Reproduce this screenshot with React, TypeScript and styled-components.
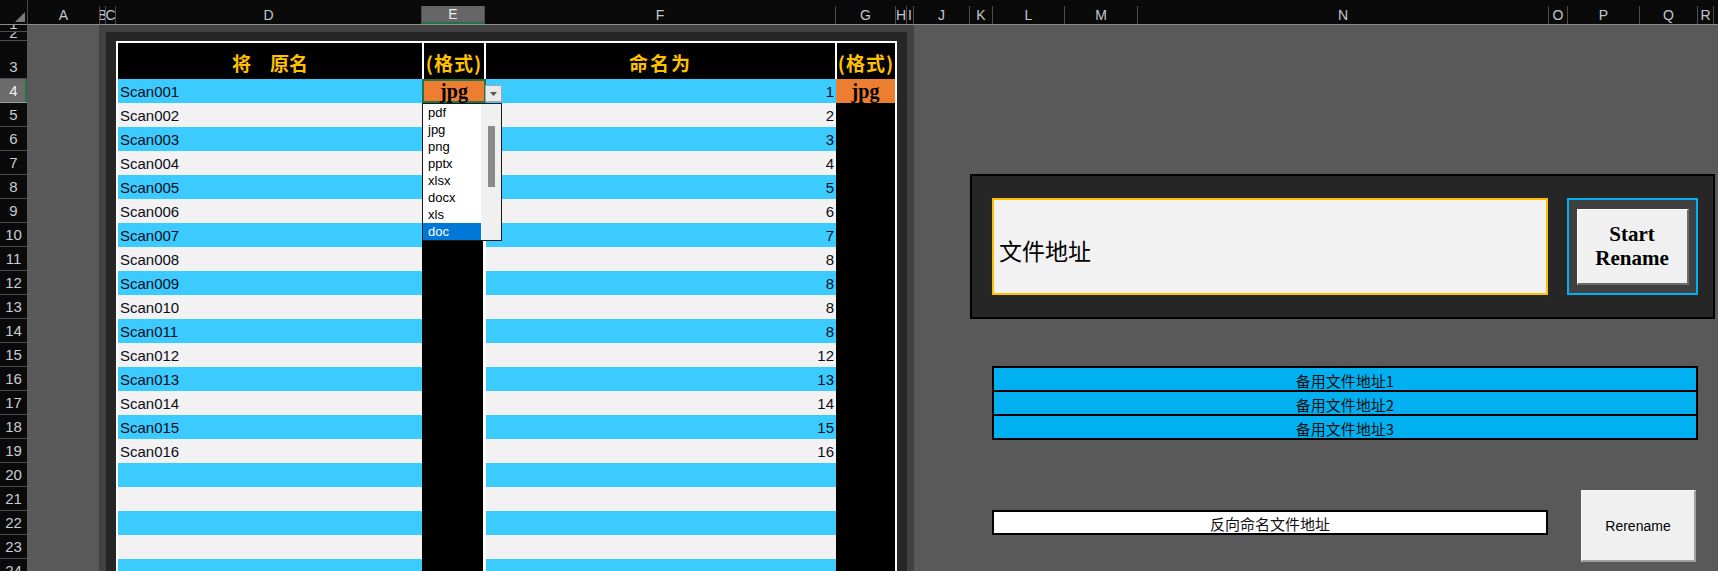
import React from 'react';
import styled, { createGlobalStyle } from 'styled-components';

const GlobalStyle = createGlobalStyle`
  html, body { margin: 0; padding: 0; background: #595959; overflow: hidden; }
  * { box-sizing: border-box; }
`;

const Sheet = styled.div`
  width: 1718px;
  height: 571px;
  display: grid;
  grid-template-columns: 28px 1fr;
  grid-template-rows: 25px 1fr;
  overflow: hidden;
  background: #595959;
`;

const Corner = styled.div`
  background: #0a0a0a;
  border-right: 1px solid #4a4a4a;
  border-bottom: 1px solid #8c8c8c;
  display: flex;
  align-items: flex-end;
  justify-content: flex-end;
  padding: 0 2px 2px 0;
`;

const ColumnHeaders = styled.div`
  display: flex;
  align-items: flex-end;
  background: #0a0a0a;
  border-bottom: 1px solid #8c8c8c;
  overflow: hidden;
`;

const ColHead = styled.div<{ $w: number; $active?: boolean }>`
  flex: none;
  width: ${(p) => p.$w}px;
  height: 18px;
  display: flex;
  align-items: center;
  justify-content: center;
  overflow: hidden;
  border-right: 1px solid #4d4d4d;
  background: ${(p) => (p.$active ? '#666666' : 'transparent')};
  border-bottom: ${(p) => (p.$active ? '2px solid #217346' : '0')};
  color: ${(p) => (p.$active ? '#ececec' : '#c4c8d0')};
  font: 14px/16px 'Liberation Sans', sans-serif;
  white-space: nowrap;
`;

const RowHeaders = styled.div`
  display: flex;
  flex-direction: column;
  background: #0a0a0a;
  border-right: 1px solid #5a5a5a;
  overflow: hidden;
`;

const RowHead = styled.div<{ $h: number; $active?: boolean }>`
  flex: none;
  height: ${(p) => p.$h}px;
  display: flex;
  align-items: flex-end;
  justify-content: center;
  padding-bottom: ${(p) => (p.$h < 12 ? 0 : 4)}px;
  overflow: hidden;
  border-bottom: 1px solid ${(p) => (p.$active ? '#9a9a9a' : '#4d4d4d')};
  background: ${(p) => (p.$active ? '#6b6b6b' : 'transparent')};
  box-shadow: ${(p) => (p.$active ? 'inset -2px 0 0 #217346' : 'none')};
  color: ${(p) => (p.$active ? '#f0f0f0' : '#c8ccd4')};
  font: 15px/15px 'Liberation Sans', sans-serif;
`;

const Canvas = styled.div`
  display: flex;
  overflow: hidden;
  min-height: 0;
`;

const GutterA = styled.div`
  flex: none;
  width: 71px;
`;

const Frame = styled.div`
  flex: none;
  width: 815px;
  background: #424242;
  padding: 7px 7px 0;
  display: flex;
`;

const DarkPanel = styled.div`
  flex: 1;
  background: #262626;
  padding: 9px 10px 0;
`;

const Table = styled.div`
  background: #ffffff;
  border: 2px solid #ffffff;
  border-bottom: 0;
  display: flex;
  flex-direction: column;
`;

const HeaderRow = styled.div`
  display: grid;
  grid-template-columns: 304px 60px 349px 58px;
  column-gap: 2px;
  height: 36px;
`;

const HeaderCell = styled.div<{ $spacing?: number }>`
  background: #000;
  color: #ffc000;
  font: bold 19px 'Noto Sans CJK SC', sans-serif;
  letter-spacing: ${(p) => p.$spacing ?? 0}px;
  display: flex;
  align-items: center;
  justify-content: center;
  padding-top: 3px;
  white-space: pre;
  overflow: hidden;
`;

const DataRow = styled.div`
  display: grid;
  grid-template-columns: 304px 64px 350px 59px;
  height: 24px;
`;

const stripe = (blue: boolean) => (blue ? '#3ccbfe' : '#f2f2f2');

const NameCell = styled.div<{ $blue: boolean }>`
  background: ${(p) => stripe(p.$blue)};
  display: flex;
  align-items: flex-end;
  padding: 0 0 3px 2px;
  font: 15px/17px 'Liberation Sans', sans-serif;
  color: #0d0d1a;
`;

const NumCell = styled(NameCell)`
  justify-content: flex-end;
  padding: 0 2px 3px 0;
`;

const FormatCell = styled.div<{ $orange?: boolean; $selected?: boolean }>`
  position: relative;
  background: ${(p) => (p.$orange ? '#ed7d31' : '#000')};
  border-right: ${(p) => (p.$selected ? '0' : '3px solid #fff')};
  box-shadow: ${(p) => (p.$selected ? 'inset 0 0 0 2px #217346' : 'none')};
  display: flex;
  align-items: center;
  justify-content: center;
  font: bold 20px/20px 'Liberation Serif', serif;
  color: #000;
`;

const TargetCell = styled.div<{ $orange?: boolean }>`
  background: ${(p) => (p.$orange ? '#ed7d31' : '#000')};
  display: flex;
  align-items: center;
  justify-content: center;
  font: bold 20px/20px 'Liberation Serif', serif;
  color: #000;
`;

const DropButton = styled.div`
  position: absolute;
  left: 63px;
  top: 6px;
  width: 17px;
  height: 17px;
  background: #e9e9e9;
  border: 1px solid #a6a6a6;
  display: flex;
  align-items: center;
  justify-content: center;
  z-index: 3;
`;

const DropList = styled.div`
  position: absolute;
  left: 0;
  top: 24px;
  width: 80px;
  height: 138px;
  background: #fff;
  border: 1px solid #1a1a1a;
  display: flex;
  z-index: 3;
`;

const ListItems = styled.div`
  flex: 1;
  display: flex;
  flex-direction: column;
`;

const ListItem = styled.div<{ $selected?: boolean }>`
  height: 17px;
  padding-left: 5px;
  font: 13px/17px 'Liberation Sans', sans-serif;
  text-align: left;
  color: ${(p) => (p.$selected ? '#fff' : '#000')};
  background: ${(p) => (p.$selected ? '#0078d7' : 'transparent')};
`;

const ScrollTrack = styled.div`
  flex: none;
  width: 20px;
  background: #f0f0f0;
  padding: 22px 0 0 7px;
`;

const ScrollThumb = styled.div`
  width: 7px;
  height: 61px;
  background: #8a8a8a;
`;

const RightArea = styled.div`
  flex: 1;
  padding: 149px 0 0 56px;
  display: flex;
  flex-direction: column;
  align-items: flex-start;
`;

const ControlPanel = styled.div`
  width: 745px;
  height: 145px;
  background: #262626;
  border: 2px solid #000;
  padding: 22px 0 0 20px;
  display: flex;
  gap: 19px;
  align-items: flex-start;
`;

const PathBox = styled.div`
  width: 556px;
  height: 97px;
  border: 2px solid #ffc000;
  background: #f2f2f2;
  display: flex;
  align-items: center;
  padding: 6px 0 0 5px;
  font: 23px 'Noto Sans CJK SC', sans-serif;
  color: #000;
`;

const StartFrame = styled.div`
  width: 131px;
  height: 97px;
  border: 2px solid #00b0f0;
  background: #404040;
  display: flex;
  align-items: center;
  justify-content: center;
`;

const StartButton = styled.button`
  width: 112px;
  height: 76px;
  margin: 0;
  padding: 0;
  background: #f0f0f0;
  border-top: 1px solid #ffffff;
  border-left: 1px solid #ffffff;
  border-right: 2px solid #6b6b6b;
  border-bottom: 2px solid #6b6b6b;
  font: bold 21px/24px 'Liberation Serif', serif;
  color: #000;
  text-align: center;
`;

const BackupList = styled.div`
  margin: 47px 0 0 22px;
  width: 706px;
  border: 2px solid #000;
  background: #000;
  display: flex;
  flex-direction: column;
  gap: 2px;
`;

const LabelBar = styled.div<{ $bg: string; $h: number }>`
  height: ${(p) => p.$h}px;
  background: ${(p) => p.$bg};
  display: flex;
  justify-content: center;
  align-items: flex-end;
  padding-bottom: 2px;
  font: 15px/15px 'Noto Sans CJK SC', sans-serif;
  color: #111;
`;

const ReverseRow = styled.div`
  margin: 50px 0 0 22px;
  display: flex;
  gap: 33px;
  align-items: flex-start;
`;

const ReverseBox = styled.div`
  margin-top: 20px;
  width: 556px;
  border: 2px solid #000;
`;

const RerenameButton = styled.button`
  width: 115px;
  height: 72px;
  margin: 0;
  padding: 0;
  background: #f0f0f0;
  border-top: 1px solid #f8f8f8;
  border-left: 1px solid #f8f8f8;
  border-right: 2px solid #a0a0a0;
  border-bottom: 2px solid #a0a0a0;
  font: 14px 'Liberation Sans', sans-serif;
  color: #000;
`;

const columns: { label: string; w: number; active?: boolean }[] = [
  { label: 'A', w: 72 },
  { label: 'B', w: 6 },
  { label: 'C', w: 10 },
  { label: 'D', w: 306 },
  { label: 'E', w: 63, active: true },
  { label: 'F', w: 351 },
  { label: 'G', w: 60 },
  { label: 'H', w: 11 },
  { label: 'I', w: 7 },
  { label: 'J', w: 56 },
  { label: 'K', w: 23 },
  { label: 'L', w: 72 },
  { label: 'M', w: 73 },
  { label: 'N', w: 411 },
  { label: 'O', w: 19 },
  { label: 'P', w: 72 },
  { label: 'Q', w: 58 },
  { label: 'R', w: 16 },
  { label: 'S', w: 20 },
];

const rowHeads: { label: string; h: number; active?: boolean }[] = [
  { label: '1', h: 7 },
  { label: '2', h: 9 },
  { label: '3', h: 38 },
  ...Array.from({ length: 21 }, (_, i) => ({ label: String(i + 4), h: 24, active: i === 0 })),
];

const numbers = [1, 2, 3, 4, 5, 6, 7, 8, 8, 8, 8, 12, 13, 14, 15, 16];
const formats = ['pdf', 'jpg', 'png', 'pptx', 'xlsx', 'docx', 'xls', 'doc'];

const rows = Array.from({ length: 21 }, (_, i) => ({
  name: i < 16 ? `Scan${String(i + 1).padStart(3, '0')}` : '',
  num: i < 16 ? String(numbers[i]) : '',
  blue: i % 2 === 0,
}));

const Dropdown = () => (
  <>
    <DropButton>
      <svg width="7" height="4" viewBox="0 0 7 4">
        <polygon points="0,0 7,0 3.5,4" fill="#555" />
      </svg>
    </DropButton>
    <DropList>
      <ListItems>
        {formats.map((f) => (
          <ListItem key={f} $selected={f === 'doc'}>
            {f}
          </ListItem>
        ))}
      </ListItems>
      <ScrollTrack>
        <ScrollThumb />
      </ScrollTrack>
    </DropList>
  </>
);

export default function App() {
  return (
    <>
      <GlobalStyle />
      <Sheet>
        <Corner>
          <svg width="10" height="10" viewBox="0 0 10 10">
            <polygon points="10,0 10,10 0,10" fill="#7a7a7a" />
          </svg>
        </Corner>
        <ColumnHeaders>
          {columns.map((c) => (
            <ColHead key={c.label} $w={c.w} $active={c.active}>
              {c.label}
            </ColHead>
          ))}
        </ColumnHeaders>
        <RowHeaders>
          {rowHeads.map((r) => (
            <RowHead key={r.label} $h={r.h} $active={r.active}>
              {r.label}
            </RowHead>
          ))}
        </RowHeaders>
        <Canvas>
          <GutterA />
          <Frame>
            <DarkPanel>
              <Table>
                <HeaderRow>
                  <HeaderCell>{'将\u3000原名'}</HeaderCell>
                  <HeaderCell $spacing={1}>(格式)</HeaderCell>
                  <HeaderCell $spacing={2}>命名为</HeaderCell>
                  <HeaderCell $spacing={1}>(格式)</HeaderCell>
                </HeaderRow>
                {rows.map((r, i) => (
                  <DataRow key={i}>
                    <NameCell $blue={r.blue}>{r.name}</NameCell>
                    {i === 0 ? (
                      <FormatCell $orange $selected>
                        jpg
                        <Dropdown />
                      </FormatCell>
                    ) : (
                      <FormatCell />
                    )}
                    <NumCell $blue={r.blue}>{r.num}</NumCell>
                    <TargetCell $orange={i === 0}>{i === 0 ? 'jpg' : ''}</TargetCell>
                  </DataRow>
                ))}
              </Table>
            </DarkPanel>
          </Frame>
          <RightArea>
            <ControlPanel>
              <PathBox>文件地址</PathBox>
              <StartFrame>
                <StartButton>
                  Start
                  <br />
                  Rename
                </StartButton>
              </StartFrame>
            </ControlPanel>
            <BackupList>
              <LabelBar $bg="#00b0f0" $h={22}>备用文件地址1</LabelBar>
              <LabelBar $bg="#00b0f0" $h={22}>备用文件地址2</LabelBar>
              <LabelBar $bg="#00b0f0" $h={22}>备用文件地址3</LabelBar>
            </BackupList>
            <ReverseRow>
              <ReverseBox>
                <LabelBar $bg="#ffffff" $h={21}>反向命名文件地址</LabelBar>
              </ReverseBox>
              <RerenameButton>Rerename</RerenameButton>
            </ReverseRow>
          </RightArea>
        </Canvas>
      </Sheet>
    </>
  );
}
